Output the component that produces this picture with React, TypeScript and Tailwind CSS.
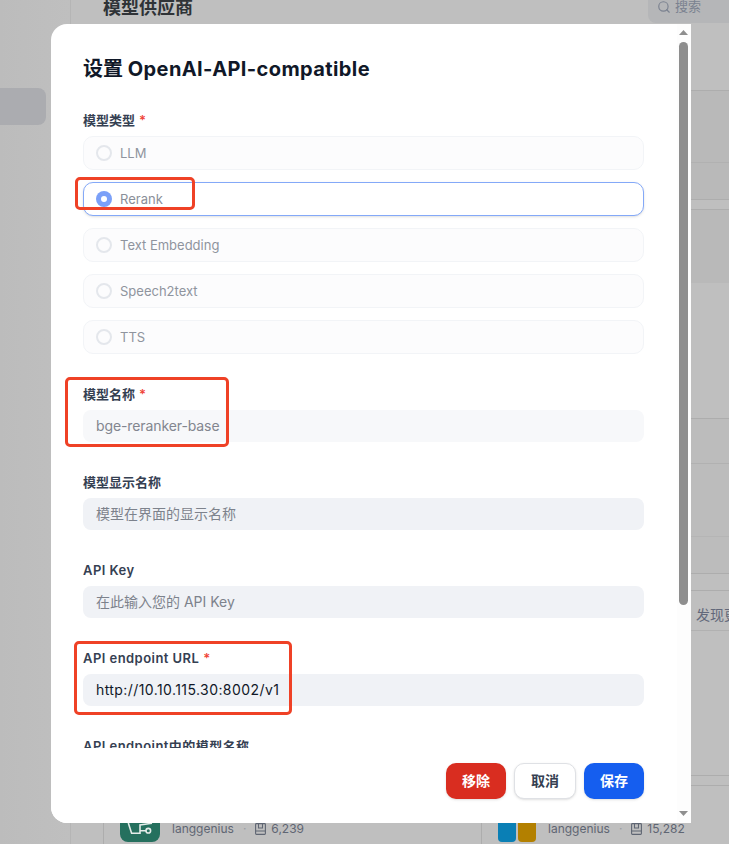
import React from "react";
import { Search } from "lucide-react";

const radios = [
  { label: "LLM", active: false },
  { label: "Rerank", active: true },
  { label: "Text Embedding", active: false },
  { label: "Speech2text", active: false },
  { label: "TTS", active: false },
];

function Label({ text, required, wide }: { text: string; required?: boolean; wide?: boolean }) {
  return (
    <div className={`mb-[7px] h-5 text-[13px] leading-[22px] font-semibold text-[#354052] ${wide ? "tracking-[0.45px]" : ""}`}>
      {text}
      {required && <span className="ml-1 text-[#f04438]">*</span>}
    </div>
  );
}

function Field({
  label,
  required,
  wide,
  value,
  tone,
}: {
  label: string;
  required?: boolean;
  wide?: boolean;
  value: string;
  tone: string;
}) {
  return (
    <div className="mb-[29px]">
      <Label text={label} required={required} wide={wide} />
      <div className={`flex h-8 items-center rounded-lg px-[13px] text-sm ${tone}`}>{value}</div>
    </div>
  );
}

function PackageIcon() {
  return (
    <svg width="11" height="12" viewBox="0 0 11 12" fill="none" stroke="#5f6673" strokeWidth="1.1">
      <rect x="0.6" y="0.6" width="9.8" height="10.8" rx="0.8" />
      <path d="M3.5 0.6v4.4h4V0.6M0.6 8h9.8" />
    </svg>
  );
}

function Meta({ count }: { count: string }) {
  return (
    <div className="flex h-[37px] items-center pt-[17px] text-xs leading-5 text-[#5f6673]">
      <span>langgenius</span>
      <span className="mx-[9px] text-[#9a9da3]">·</span>
      <PackageIcon />
      <span className="ml-[5px]">{count}</span>
    </div>
  );
}

export default function App() {
  return (
    <div className="relative flex h-[844px] w-[729px] overflow-hidden bg-[#bfbfbf] font-['Inter','Noto_Sans_CJK_SC',sans-serif]">
      {/* page behind the dialog */}
      <aside className="h-full w-[71px] shrink-0 border-r border-[#b5b5b5] bg-gradient-to-r from-[#bcbcbc] to-[#bfbfbf] pt-[88px]">
        <div className="h-[37px] w-[46px] rounded-r-lg bg-[#abacb0]" />
      </aside>

      <main className="flex h-full min-w-0 flex-1 flex-col pl-[32px]">
        <div className="flex h-[90px] shrink-0 items-start justify-between">
          <h2 className="-mt-1 text-lg leading-6 font-bold text-[#2f3337]">模型供应商</h2>
          <div className="-mt-[9px] flex h-8 w-[81px] shrink-0 items-center gap-[4px] rounded-l-lg bg-[#b5b6b8] pl-[9px] text-[13px] text-[#7b8290]">
            <Search size={14} />
            <span>搜索</span>
          </div>
        </div>

        <div className="grid flex-1 grid-cols-[369px_369px] gap-[9px]">
          <div className="flex flex-col justify-end">
            <div className="flex h-[59px] gap-3 border-t border-l border-[#adadad] pt-[16px] pl-[16px]">
              <div className="h-10 w-10 rounded-lg bg-[#25705e]">
                <svg width="40" height="40" viewBox="0 0 40 40" fill="none" stroke="#e4ece9" strokeWidth="1.6">
                  <path d="M8.3 21l3.3 10.3H20V23l12-1.7M20 28.7h6" />
                  <circle cx="28.3" cy="28.7" r="2.3" />
                </svg>
              </div>
              <Meta count="6,239" />
            </div>
          </div>

          <div className="flex flex-col">
            <div className="h-[110px] border-y border-[#adadad] bg-[#b9b9b9]">
              <div className="h-[72px] border-b border-[#b1b1b1]" />
            </div>
            <div className="mt-[9px] h-[201px] border-t border-[#adadad]">
              <div className="h-[73px] bg-[#b9b9b9]" />
            </div>
            <div className="mt-[8px] h-[156px] border-y border-[#adadad] bg-[#bcbcbc]">
              <div className="h-[45px] border-b border-[#b1b1b1]" />
              <div className="h-[73px] border-b border-[#b5b5b5]" />
            </div>
            <div className="mt-[16px] h-[186px] border-y border-[#adadad]">
              <div className="flex h-[40px] items-center border-b border-[#b1b1b1] pt-[9px] pl-[215px] text-sm whitespace-nowrap text-[#62687a]">
                发现更多
              </div>
            </div>
            <div className="mt-[9px] flex h-[59px] gap-3 border-t border-l border-[#adadad] pt-[16px] pl-[16px]">
              <div className="flex gap-[2px]">
                <div className="h-10 w-[18px] rounded-b bg-[#0a7fb5]" />
                <div className="h-10 w-[18px] rounded-b bg-[#b38000]" />
              </div>
              <Meta count="15,282" />
            </div>
          </div>
        </div>
      </main>

      {/* dialog */}
      <div className="absolute top-[24px] left-[51px] flex h-[799px] w-[640px] overflow-hidden rounded-l-2xl bg-white">
        <div className="relative h-full w-[626px] overflow-hidden pt-[31px] pr-[33px] pl-[32px]">
          <h1 className="mb-[26px] text-xl leading-7 font-bold text-[#101828]">
            设置 <span className="tracking-[0.4px]">OpenAI-API-compatible</span>
          </h1>

          <div className="mb-[29px]">
            <Label text="模型类型" required />
            <div className="flex flex-col gap-3">
              {radios.map((r) => (
                <div
                  key={r.label}
                  className={
                    r.active
                      ? "flex h-[34px] items-center gap-2 rounded-[10px] border border-[#84a9f8] bg-white pl-3 text-[13px] text-[#8a8f99] shadow-sm"
                      : "flex h-[34px] items-center gap-2 rounded-[10px] border border-[#f2f4f7] bg-[#fcfcfd] pl-3 text-[13px] text-[#8f949e]"
                  }
                >
                  {r.active ? (
                    <span className="flex h-4 w-4 items-center justify-center rounded-full bg-[#7ba0f8]">
                      <span className="h-[6px] w-[6px] rounded-full bg-white" />
                    </span>
                  ) : (
                    <span className="h-4 w-4 rounded-full border-2 border-[#e4e7ec]" />
                  )}
                  <span className="pt-[2px]">{r.label}</span>
                </div>
              ))}
            </div>
          </div>

          <Field label="模型名称" required value="bge-reranker-base" tone="bg-[#f7f8fa] tracking-[-0.1px] text-[#82868f]" />
          <Field label="模型显示名称" value="模型在界面的显示名称" tone="bg-[#f0f2f6] text-[#7d828c]" />
          <Field label="API Key" wide value="在此输入您的 API Key" tone="bg-[#f0f2f6] text-[#7d828c]" />
          <Field
            label="API endpoint URL"
            required
            wide
            value="http://10.10.115.30:8002/v1"
            tone="bg-[#f0f2f6] tracking-[0.42px] text-[#101828]"
          />
          <Label text="API endpoint中的模型名称" wide />

          <div className="absolute right-0 bottom-0 left-0 flex h-[75px] justify-end gap-2 bg-white pt-[15px] pr-[33px]">
            <button className="h-9 w-[60px] rounded-[10px] bg-[#d92d20] text-sm font-semibold text-white shadow-sm">移除</button>
            <button className="h-9 w-[62px] rounded-[10px] border border-[#dfe1e5] bg-white text-sm font-semibold text-[#354052] shadow-sm">取消</button>
            <button className="h-9 w-[60px] rounded-[10px] bg-[#155eef] text-sm font-semibold text-white shadow-sm">保存</button>
          </div>
        </div>

        {/* scrollbar */}
        <div className="flex h-full w-[14px] flex-col bg-[#fdfdfd] pt-[6px] pl-[2px]">
          <svg width="9" height="5" viewBox="0 0 9 5" fill="#8e8e8e">
            <polygon points="4.5,0 9,5 0,5" />
          </svg>
          <div className="mt-[7px] h-[563px] w-[9px] rounded-full bg-[#8e8e8e]" />
          <svg className="mt-auto mb-[7px]" width="9" height="5" viewBox="0 0 9 5" fill="#8e8e8e">
            <polygon points="0,0 9,0 4.5,5" />
          </svg>
        </div>
      </div>

      {/* red annotation boxes */}
      <div className="absolute top-[177px] left-[75px] h-[33px] w-[120px] rounded-[5px] border-[3px] border-[#ef4126]" />
      <div className="absolute top-[377px] left-[65px] h-[70px] w-[164px] rounded-[5px] border-[3px] border-[#ef4126]" />
      <div className="absolute top-[641px] left-[74px] h-[74px] w-[218px] rounded-[5px] border-[3px] border-[#ef4126]" />
    </div>
  );
}
